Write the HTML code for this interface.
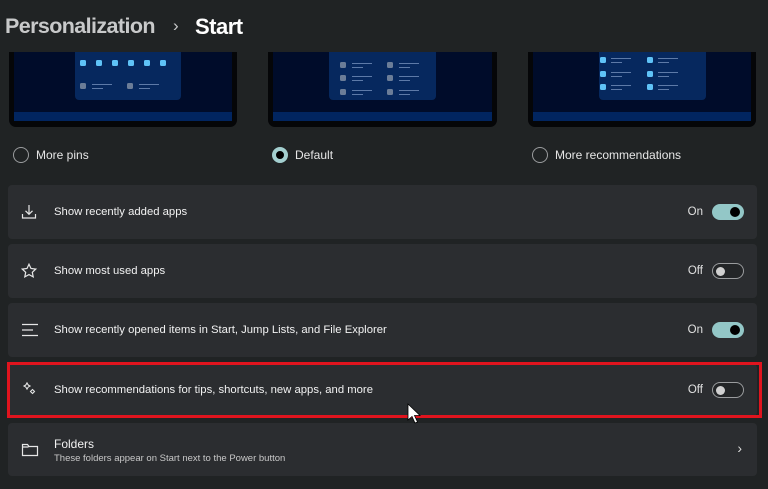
<!DOCTYPE html>
<html><head><meta charset="utf-8"><style>
*{margin:0;padding:0;box-sizing:border-box}
body{width:768px;height:489px;background:#202324;overflow:hidden;position:relative;font-family:"Liberation Sans",sans-serif;color:#fff}
.abs{position:absolute}
.h{top:14px;font-size:22px;font-weight:bold;letter-spacing:-0.5px}
.frame{position:absolute;top:46px;height:81px;background:#050608;border-radius:0 0 7px 7px}
.scr{position:absolute;left:5px;right:5px;top:0;bottom:6px;background:#000c2a}
.bar{position:absolute;left:0;right:0;bottom:0;height:9px;background:#012560}
.panel{position:absolute;top:0;height:54px;background:#06285e;border-radius:0 0 4px 4px}
.sq{position:absolute;width:6px;height:6px;border-radius:1.5px}
.ln{position:absolute;height:1px;background:#5d7aa8}
.radio{position:absolute;top:147px;width:16px;height:16px;border-radius:50%;border:1.5px solid #9a9c9e}
.rl{position:absolute;top:148px;font-size:12px;color:#e6e6e6}
.card{position:absolute;left:8px;width:749px;background:#2b2d30;border-radius:4px}
.t{position:absolute;left:46px;font-size:11.3px;color:#f2f2f2}
.st{position:absolute;right:54px;font-size:11.5px;color:#e0e0e0}
.tog{position:absolute;right:13px;width:32px;height:16px;border-radius:8px}
.on{background:#93c7c7}
.on::after{content:"";position:absolute;right:4px;top:3px;width:10px;height:10px;border-radius:50%;background:#000}
.off{border:1.3px solid #9a9c9e;background:#232527}
.off::after{content:"";position:absolute;left:3px;top:2.5px;width:9px;height:9px;border-radius:50%;background:#d0d0d0}
svg.ic{position:absolute;left:13px}
</style></head><body>
<div class="abs h" style="left:5px;color:#c8c9ca;font-size:21.5px;letter-spacing:-0.6px">Personalization</div>
<div class="abs" style="left:173px;top:16px;font-size:17px;color:#c8c9ca">›</div>
<div class="abs h" style="left:195px">Start</div>
<div class="abs" style="left:0;top:46px;width:768px;height:6px;background:#202324;z-index:2"></div>

<div class="frame" style="left:9px;width:228px"><div class="scr"><div class="panel" style="left:61px;width:106px"></div><div class="bar"></div></div></div>
<div class="frame" style="left:268px;width:229px"><div class="scr"><div class="panel" style="left:56px;width:107px"></div><div class="bar"></div></div></div>
<div class="frame" style="left:528px;width:228px"><div class="scr"><div class="panel" style="left:66px;width:107px"></div><div class="bar"></div></div></div>

<div class="sq" style="left:80px;top:60px;background:#5fc3f7"></div>
<div class="sq" style="left:96px;top:60px;background:#5fc3f7"></div>
<div class="sq" style="left:112px;top:60px;background:#5fc3f7"></div>
<div class="sq" style="left:128px;top:60px;background:#5fc3f7"></div>
<div class="sq" style="left:144px;top:60px;background:#5fc3f7"></div>
<div class="sq" style="left:160px;top:60px;background:#5fc3f7"></div>
<div class="sq" style="left:80px;top:83px;background:#6b7d98"></div><div class="ln" style="left:92px;top:84px;width:20px"></div><div class="ln" style="left:92px;top:88px;width:11px"></div>
<div class="sq" style="left:127px;top:83px;background:#6b7d98"></div><div class="ln" style="left:139px;top:84px;width:20px"></div><div class="ln" style="left:139px;top:88px;width:11px"></div>
<div class="sq" style="left:340px;top:62px;background:#6b7d98"></div><div class="ln" style="left:352px;top:63px;width:20px"></div><div class="ln" style="left:352px;top:67px;width:11px"></div>
<div class="sq" style="left:340px;top:75px;background:#6b7d98"></div><div class="ln" style="left:352px;top:76px;width:20px"></div><div class="ln" style="left:352px;top:80px;width:11px"></div>
<div class="sq" style="left:340px;top:89px;background:#6b7d98"></div><div class="ln" style="left:352px;top:90px;width:20px"></div><div class="ln" style="left:352px;top:94px;width:11px"></div>
<div class="sq" style="left:387px;top:62px;background:#6b7d98"></div><div class="ln" style="left:399px;top:63px;width:20px"></div><div class="ln" style="left:399px;top:67px;width:11px"></div>
<div class="sq" style="left:387px;top:75px;background:#6b7d98"></div><div class="ln" style="left:399px;top:76px;width:20px"></div><div class="ln" style="left:399px;top:80px;width:11px"></div>
<div class="sq" style="left:387px;top:89px;background:#6b7d98"></div><div class="ln" style="left:399px;top:90px;width:20px"></div><div class="ln" style="left:399px;top:94px;width:11px"></div>
<div class="sq" style="left:600px;top:57px;background:#5fc3f7"></div><div class="ln" style="left:611px;top:58px;width:20px"></div><div class="ln" style="left:611px;top:62px;width:11px"></div>
<div class="sq" style="left:600px;top:71px;background:#5fc3f7"></div><div class="ln" style="left:611px;top:72px;width:20px"></div><div class="ln" style="left:611px;top:76px;width:11px"></div>
<div class="sq" style="left:600px;top:84px;background:#5fc3f7"></div><div class="ln" style="left:611px;top:85px;width:20px"></div><div class="ln" style="left:611px;top:89px;width:11px"></div>
<div class="sq" style="left:647px;top:57px;background:#5fc3f7"></div><div class="ln" style="left:658px;top:58px;width:20px"></div><div class="ln" style="left:658px;top:62px;width:11px"></div>
<div class="sq" style="left:647px;top:71px;background:#5fc3f7"></div><div class="ln" style="left:658px;top:72px;width:20px"></div><div class="ln" style="left:658px;top:76px;width:11px"></div>
<div class="sq" style="left:647px;top:84px;background:#5fc3f7"></div><div class="ln" style="left:658px;top:85px;width:20px"></div><div class="ln" style="left:658px;top:89px;width:11px"></div>

<div class="radio" style="left:13px"></div><div class="rl" style="left:36px">More pins</div>
<div class="radio" style="left:272px;border:4.5px solid #a3cfcf;background:#000"></div><div class="rl" style="left:295px">Default</div>
<div class="radio" style="left:532px"></div><div class="rl" style="left:555px">More recommendations</div>

<div class="card" style="top:185px;height:54px">
<svg class="ic" style="top:19px" width="16" height="16" viewBox="0 0 16 16" fill="none" stroke="#e6e6e6" stroke-width="1.2"><path d="M8 1v9M4.5 6.8L8 10.3l3.5-3.5M1.5 10v4h13v-4"/></svg>
<div class="t" style="top:21px">Show recently added apps</div><div class="st" style="top:21px">On</div><div class="tog on" style="top:19px"></div></div>
<div class="card" style="top:244px;height:54px">
<svg class="ic" style="top:19px" width="16" height="16" viewBox="0 0 16 16" fill="none" stroke="#e6e6e6" stroke-width="1.2"><path d="M8 1.2l2 4.3 4.7.6-3.4 3.2.9 4.6L8 11.6l-4.2 2.3.9-4.6L1.3 6.1 6 5.5z"/></svg>
<div class="t" style="top:21px">Show most used apps</div><div class="st" style="top:21px">Off</div><div class="tog off" style="top:19px"></div></div>
<div class="card" style="top:303px;height:54px">
<svg class="ic" style="top:19px" width="18" height="16" viewBox="0 0 18 16" fill="none" stroke="#e6e6e6" stroke-width="1.2"><path d="M1 2.5h16M1 8h11M1 13.5h16"/></svg>
<div class="t" style="top:21px">Show recently opened items in Start, Jump Lists, and File Explorer</div><div class="st" style="top:21px">On</div><div class="tog on" style="top:19px"></div></div>
<div class="card" style="top:364px;height:52px">
<svg class="ic" style="top:17px" width="16" height="16" viewBox="0 0 16 16" fill="none" stroke="#e6e6e6" stroke-width="1.1"><path d="M6 1.5q.6 3 3.5 3.5Q6.6 5.6 6 8.5 5.4 5.6 2.5 5 5.4 4.5 6 1.5zM11.5 8.5l2 2-2 2-2-2z"/></svg>
<div class="t" style="top:20px">Show recommendations for tips, shortcuts, new apps, and more</div><div class="st" style="top:20px">Off</div><div class="tog off" style="top:18px"></div></div>
<div class="abs" style="left:7px;top:362px;width:755px;height:56px;border:3px solid #e0141e"></div>
<div class="card" style="top:423px;height:53px">
<svg class="ic" style="top:19px" width="18" height="16" viewBox="0 0 18 16" fill="none" stroke="#e6e6e6" stroke-width="1.2"><path d="M1.5 2.5h5l1.5 2h8.5v9h-15z M1.5 5h6"/></svg>
<div class="t" style="top:14px;font-size:12px">Folders</div>
<div class="t" style="top:30px;font-size:9.5px;color:#c8c8c8">These folders appear on Start next to the Power button</div>
<div class="abs" style="right:15px;top:17px;font-size:14px;color:#ddd">›</div></div>

<svg class="abs" style="left:407px;top:403px" width="14" height="22" viewBox="0 0 14 22"><path d="M1 1v16l4-3.5 3 6.5 2.5-1-3-6.5h5.5z" fill="#fff" stroke="#000" stroke-width="0.8"/></svg>
</body></html>
